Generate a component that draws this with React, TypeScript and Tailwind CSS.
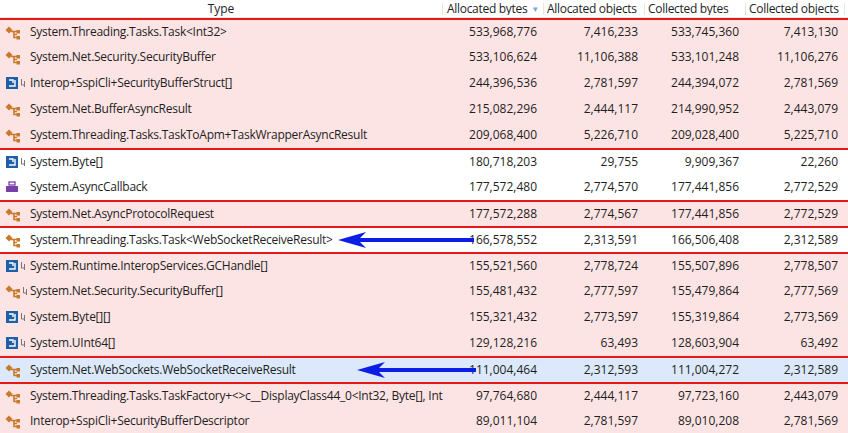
const pink = "bg-[#fde4e4]";

type Row = {
  name: string;
  icon: "cls" | "arr" | "clsarr" | "del";
  v: [string, string, string, string];
  bg: string;
  top?: boolean;
  arrow?: [number, number];
};

const rows: Row[] = [
  { name: "System.Threading.Tasks.Task<Int32>", icon: "cls", v: ["533,968,776", "7,416,233", "533,745,360", "7,413,130"], bg: pink, top: true },
  { name: "System.Net.Security.SecurityBuffer", icon: "cls", v: ["533,106,624", "11,106,388", "533,101,248", "11,106,276"], bg: pink },
  { name: "Interop+SspiCli+SecurityBufferStruct[]", icon: "arr", v: ["244,396,536", "2,781,597", "244,394,072", "2,781,569"], bg: pink },
  { name: "System.Net.BufferAsyncResult", icon: "cls", v: ["215,082,296", "2,444,117", "214,990,952", "2,443,079"], bg: pink },
  { name: "System.Threading.Tasks.TaskToApm+TaskWrapperAsyncResult", icon: "cls", v: ["209,068,400", "5,226,710", "209,028,400", "5,225,710"], bg: pink },
  { name: "System.Byte[]", icon: "arr", v: ["180,718,203", "29,755", "9,909,367", "22,260"], bg: "bg-white", top: true },
  { name: "System.AsyncCallback", icon: "del", v: ["177,572,480", "2,774,570", "177,441,856", "2,772,529"], bg: "bg-white" },
  { name: "System.Net.AsyncProtocolRequest", icon: "cls", v: ["177,572,288", "2,774,567", "177,441,856", "2,772,529"], bg: pink, top: true },
  { name: "System.Threading.Tasks.Task<WebSocketReceiveResult>", icon: "cls", v: ["166,578,552", "2,313,591", "166,506,408", "2,312,589"], bg: "bg-white", top: true, arrow: [338, 474] },
  { name: "System.Runtime.InteropServices.GCHandle[]", icon: "arr", v: ["155,521,560", "2,778,724", "155,507,896", "2,778,507"], bg: pink, top: true },
  { name: "System.Net.Security.SecurityBuffer[]", icon: "clsarr", v: ["155,481,432", "2,777,597", "155,479,864", "2,777,569"], bg: pink },
  { name: "System.Byte[][]", icon: "arr", v: ["155,321,432", "2,773,597", "155,319,864", "2,773,569"], bg: pink },
  { name: "System.UInt64[]", icon: "arr", v: ["129,128,216", "63,493", "128,603,904", "63,492"], bg: pink },
  { name: "System.Net.WebSockets.WebSocketReceiveResult", icon: "cls", v: ["111,004,464", "2,312,593", "111,004,272", "2,312,589"], bg: "bg-[#dbe9fa]", top: true, arrow: [357, 476] },
  { name: "System.Threading.Tasks.TaskFactory+<>c__DisplayClass44_0<Int32, Byte[], Int32>", icon: "cls", v: ["97,764,680", "2,444,117", "97,723,160", "2,443,079"], bg: pink, top: true },
  { name: "Interop+SspiCli+SecurityBufferDescriptor", icon: "cls", v: ["89,011,104", "2,781,597", "89,010,208", "2,781,569"], bg: pink },
];

function ClassIcon() {
  return (
    <svg width="16" height="15" viewBox="0 0 16 15" className="shrink-0">
      <path d="M0.5 5 L4 1.5 L7.5 5 L4 8.5 Z" fill="#c8792a" />
      <path d="M6 6.5 h6 M9 6.5 v6 h3 M9 9.5 h3" stroke="#c8792a" strokeWidth="1.6" fill="none" />
      <rect x="11.5" y="5" width="3.5" height="3.5" fill="#c8792a" />
      <rect x="11.5" y="11" width="3.5" height="3.5" fill="#c8792a" />
    </svg>
  );
}

function ArrIcon() {
  return (
    <svg width="14" height="14" viewBox="0 0 14 14" className="shrink-0">
      <rect x="1" y="1" width="12" height="12" fill="#1f5fa8" />
      <path d="M4 4 h4 v3 M10 4 v6 h-6" stroke="#fff" strokeWidth="1.4" fill="none" />
    </svg>
  );
}

function Pin() {
  return (
    <svg width="7" height="12" viewBox="0 0 7 12" className="shrink-0">
      <path d="M1.5 2 v6 h3 M4.5 4 v6" stroke="#777" strokeWidth="1" fill="none" />
    </svg>
  );
}

function DelIcon() {
  return (
    <svg width="14" height="14" viewBox="0 0 14 14" className="shrink-0">
      <rect x="4" y="2" width="6" height="3" fill="none" stroke="#7a3fa8" strokeWidth="1.3" />
      <rect x="1" y="6" width="12" height="6" fill="#7a3fa8" />
    </svg>
  );
}

function RowIcon({ kind }: { kind: Row["icon"] }) {
  return (
    <div className="flex w-[30px] shrink-0 items-center gap-[1px] pl-[5px]">
      {kind === "cls" && <ClassIcon />}
      {kind === "del" && <DelIcon />}
      {kind === "arr" && (<><ArrIcon /><Pin /></>)}
      {kind === "clsarr" && (<><ClassIcon /><Pin /></>)}
    </div>
  );
}

function Arrow({ from, to }: { from: number; to: number }) {
  const w = to - from;
  return (
    <svg className="absolute top-[2px]" style={{ left: from }} width={w} height="20" viewBox={`0 0 ${w} 20`}>
      <path d={`M0 10 L28 2 L22 8 H${w} V12 H22 L28 18 Z`} fill="#0b1ee6" />
    </svg>
  );
}

const cols = ["w-[101px]", "w-[101px]", "w-[101px]", "w-[99px]"];

export default function App() {
  return (
    <div className="h-[433px] w-[848px] overflow-hidden bg-white text-[12px] text-[#1e1e1e]" style={{ fontFamily: '"Open Sans", "Noto Sans", sans-serif' }}>
      <div className="flex h-[18px] items-center whitespace-nowrap border-b border-[#e5e5e5] bg-white leading-none">
        <div className="w-[443px] border-r border-[#e5e5e5] text-center">Type</div>
        <div className="flex w-[101px] items-center overflow-hidden border-r border-[#e5e5e5] pl-[4px] tracking-[-0.3px]">
          Allocated bytes
          <span className="ml-[4px] text-[8px] text-[#7aa7d6]">▼</span>
        </div>
        <div className="w-[101px] overflow-hidden border-r border-[#e5e5e5] pl-[3px] tracking-[-0.3px]">Allocated objects</div>
        <div className="w-[101px] overflow-hidden border-r border-[#e5e5e5] pl-[3px] tracking-[-0.3px]">Collected bytes</div>
        <div className="w-[99px] overflow-hidden border-r border-[#e5e5e5] pl-[3px] tracking-[-0.3px]">Collected objects</div>
      </div>
      {rows.map((r) => (
        <div key={r.name} className={`relative flex h-[26px] items-center ${r.bg} ${r.top ? "border-t-2 border-[#e81818]" : ""}`}>
          <div className="flex w-[443px] items-center overflow-hidden whitespace-nowrap">
            <RowIcon kind={r.icon} />
            <span className="tracking-[-0.25px]">{r.name}</span>
          </div>
          {r.v.map((v, i) => (
            <div key={i} className={`${cols[i]} pr-[7px] text-right`}>{v}</div>
          ))}
          {r.arrow && <Arrow from={r.arrow[0]} to={r.arrow[1]} />}
        </div>
      ))}
    </div>
  );
}
